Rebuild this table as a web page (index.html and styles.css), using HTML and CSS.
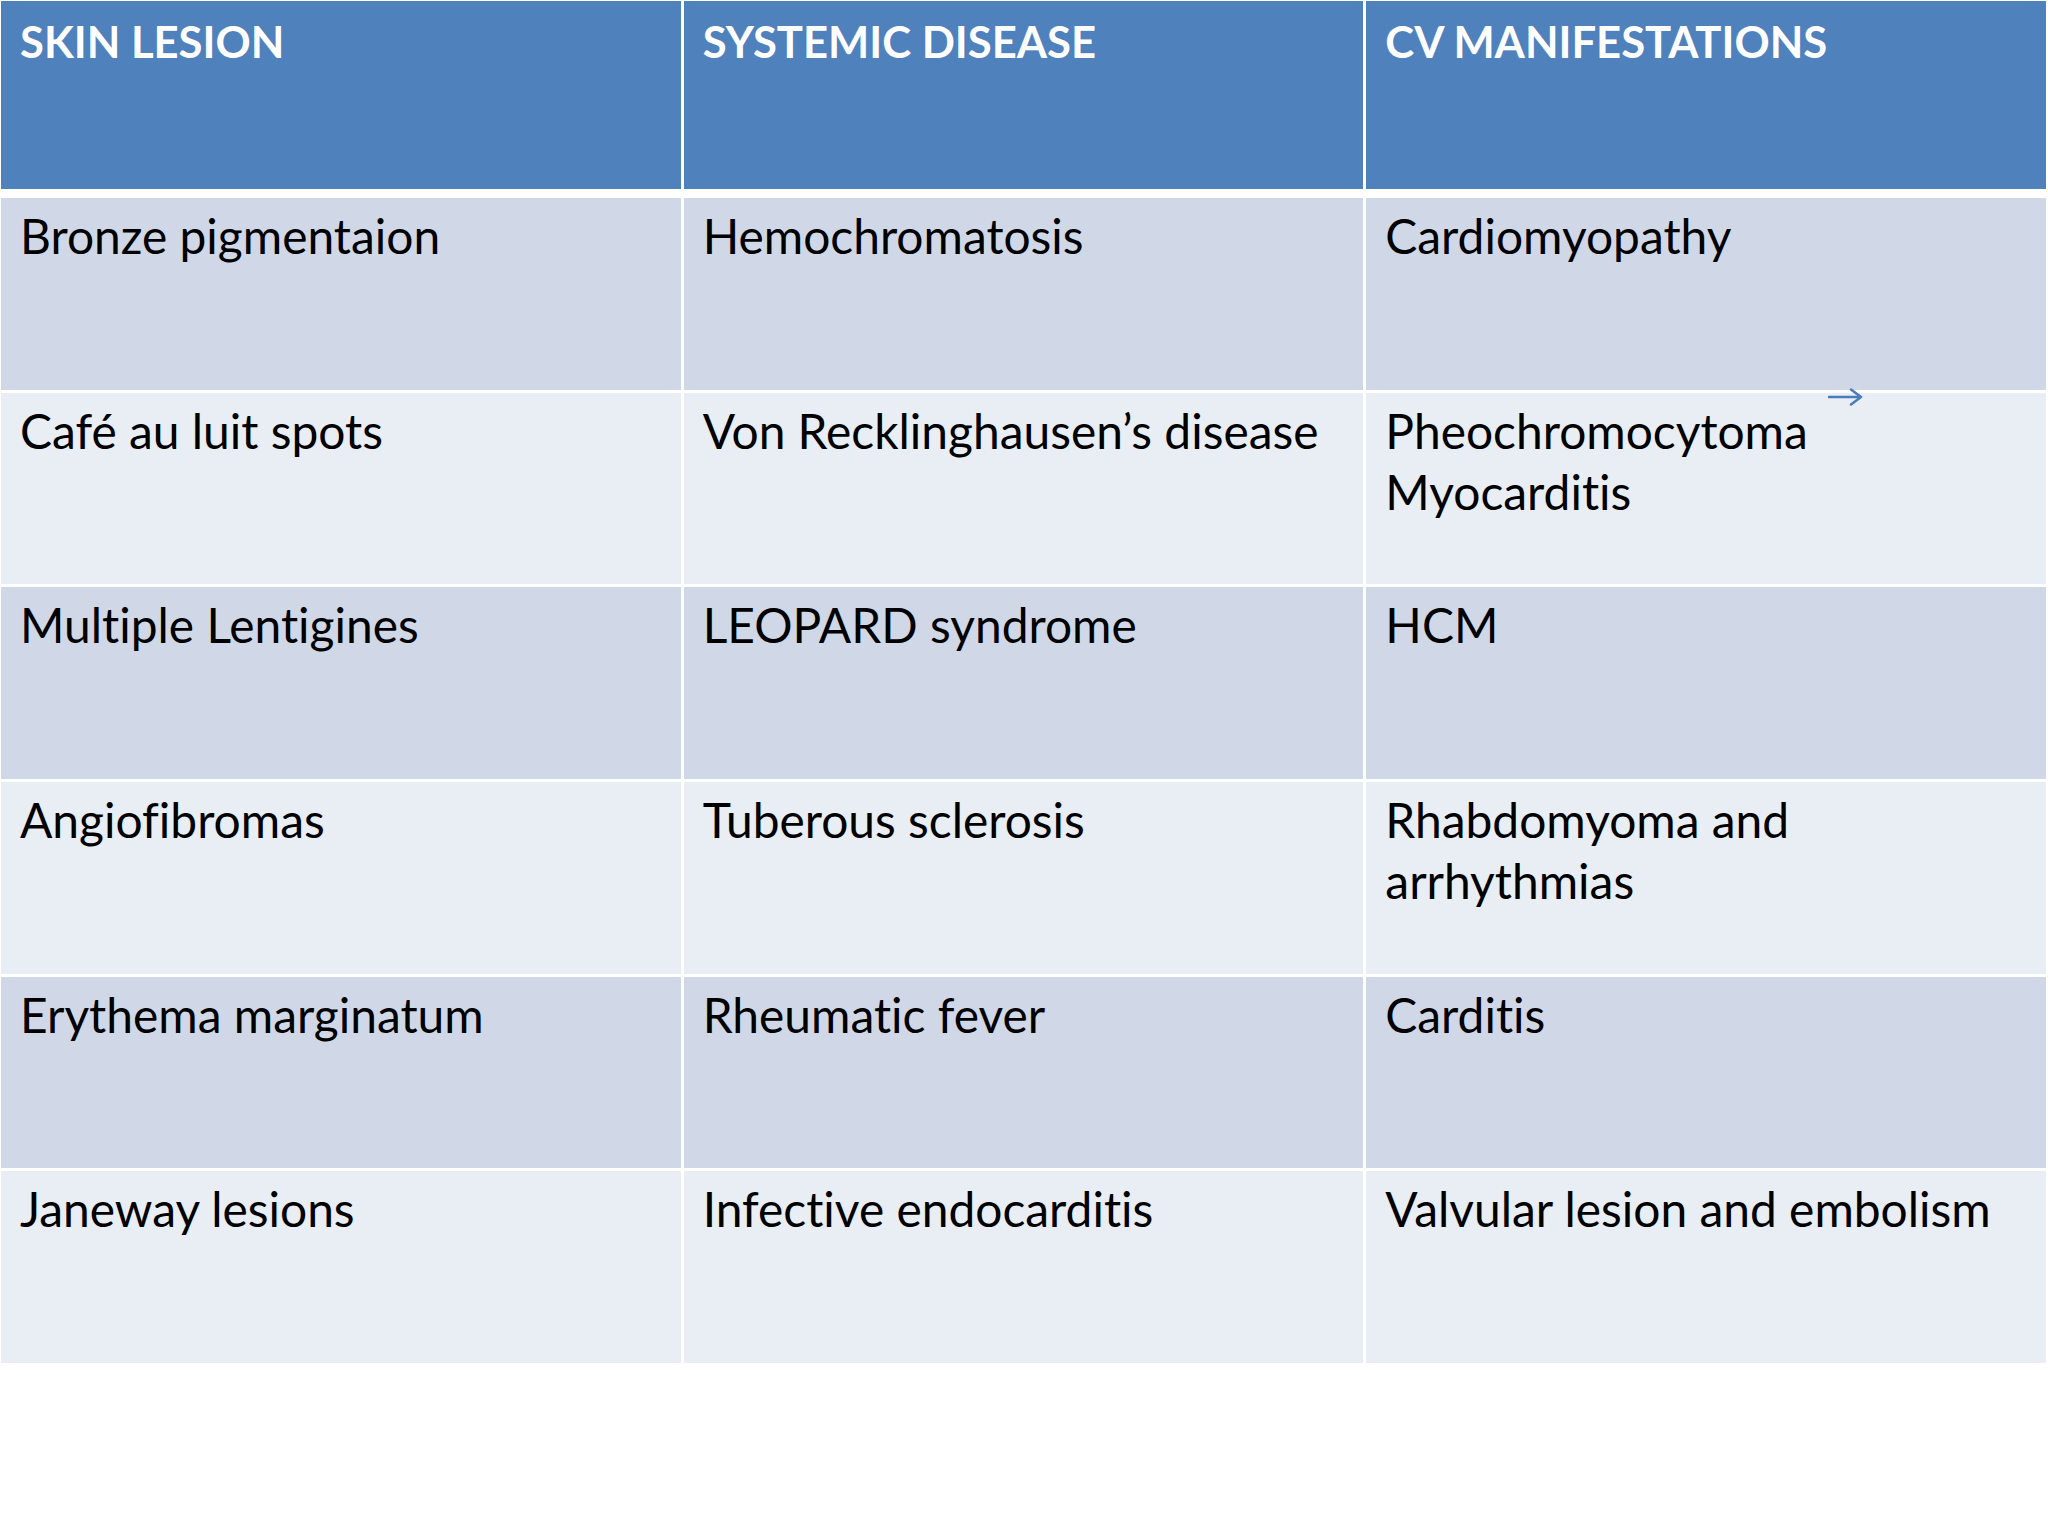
FILE: index.html
```html
<!DOCTYPE html>
<html lang="en">
<head>
<meta charset="utf-8">
<title>Skin lesions and CV manifestations</title>
<link rel="stylesheet" href="styles.css">
</head>
<body>
<div class="table">
  <div class="cell head">SKIN LESION</div>
  <div class="cell head">SYSTEMIC DISEASE</div>
  <div class="cell head">CV MANIFESTATIONS</div>

  <div class="cell odd">Bronze pigmentaion</div>
  <div class="cell odd">Hemochromatosis</div>
  <div class="cell odd">Cardiomyopathy</div>

  <div class="cell even">Café au luit spots</div>
  <div class="cell even">Von Recklinghausen’s disease</div>
  <div class="cell even arrow-cell">Pheochromocytoma<br>Myocarditis
    <svg class="arrow" width="36" height="20" viewBox="0 0 36 20" aria-hidden="true">
      <path d="M1 10 H33 M23 2.5 L33 10 L23 17.5" fill="none" stroke="#4a7ebb" stroke-width="2.6" stroke-linecap="round" stroke-linejoin="round"/>
    </svg>
  </div>

  <div class="cell odd">Multiple Lentigines</div>
  <div class="cell odd">LEOPARD syndrome</div>
  <div class="cell odd">HCM</div>

  <div class="cell even">Angiofibromas</div>
  <div class="cell even">Tuberous sclerosis</div>
  <div class="cell even">Rhabdomyoma and<br>arrhythmias</div>

  <div class="cell odd">Erythema marginatum</div>
  <div class="cell odd">Rheumatic fever</div>
  <div class="cell odd">Carditis</div>

  <div class="cell even">Janeway lesions</div>
  <div class="cell even">Infective endocarditis</div>
  <div class="cell even">Valvular lesion and embolism</div>
</div>
</body>
</html>
```

FILE: styles.css
```css
html, body {
  margin: 0;
  padding: 0;
  background: #ffffff;
}

body {
  width: 2048px;
  height: 1536px;
  overflow: hidden;
  font-family: Lato, "Open Sans", "Noto Sans", sans-serif;
  font-variant-ligatures: none;
}

.table {
  display: grid;
  grid-template-columns: repeat(3, 1fr);
  grid-template-rows: 194px repeat(6, 191.67px);
  gap: 3px;
  margin: 1px 2px 0 1px;
}

.cell {
  box-sizing: border-box;
  padding: 7px 19px 0 19px;
  font-size: 47.9px;
  line-height: 61px;
  color: #000000;
}

.head {
  background: #4f81bd;
  color: #ffffff;
  font-weight: 700;
  font-size: 43.6px;
  padding-top: 10px;
  margin-bottom: 6px;
}

.odd {
  background: #d0d8e8;
}

.even {
  background: #e9edf4;
}

.arrow-cell {
  position: relative;
}

.arrow {
  position: absolute;
  left: 462px;
  top: -6px;
}
```
